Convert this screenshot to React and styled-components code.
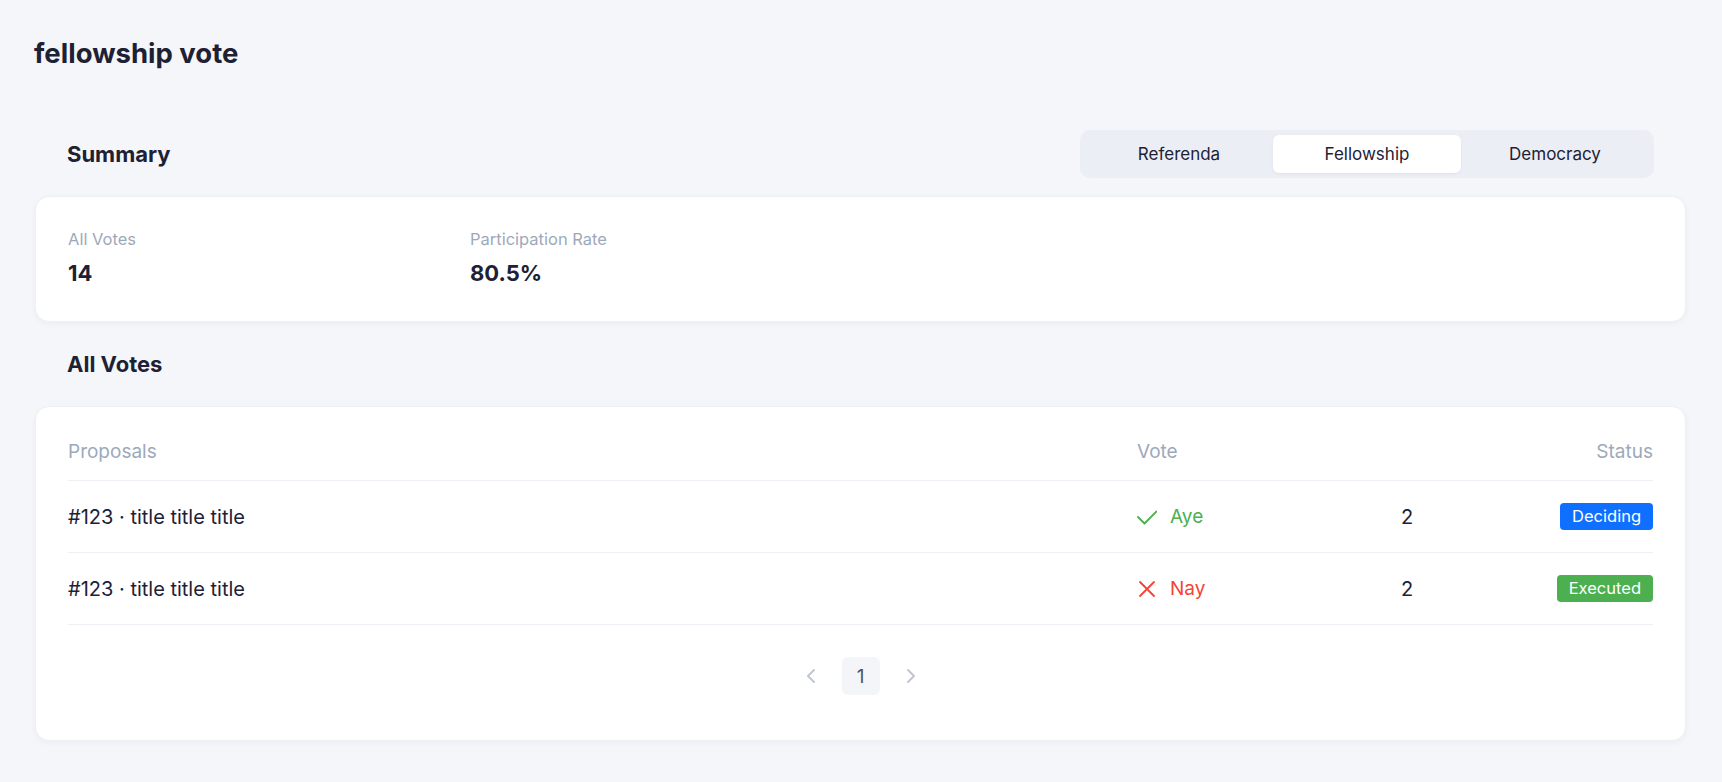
import React from 'react';
import styled, { createGlobalStyle } from 'styled-components';

const GlobalStyle = createGlobalStyle`
  * { box-sizing: border-box; }
  body {
    margin: 0;
    background: #f5f6fa;
    font-family: Inter, "Noto Sans", sans-serif;
    color: #1e2134;
  }
`

const tabs = ['Referenda', 'Fellowship', 'Democracy']
const votes = [
    { id: 123, title: 'title title title', aye: true, count: 2, status: 'Deciding' },
    { id: 123, title: 'title title title', aye: false, count: 2, status: 'Executed' },
]

const CheckIcon = () => (
    <svg width="20" height="20" viewBox="0 0 20 20" fill="none">
        <polyline points="1,10 7.5,16.5 19.5,4.5" stroke="currentColor" strokeWidth="1.8" strokeLinecap="round" strokeLinejoin="round" />
    </svg>
)

const CrossIcon = () => (
    <svg width="20" height="20" viewBox="0 0 20 20" fill="none">
        <path d="M3 3 L17 17 M17 3 L3 17" stroke="currentColor" strokeWidth="1.8" strokeLinecap="round" />
    </svg>
)

const Chevron = ({ dir }) => (
    <svg width="24" height="24" viewBox="0 0 24 24" fill="none">
        <path d={dir === 'left' ? 'M15 18 L9 12 L15 6' : 'M9 18 L15 12 L9 6'} stroke="currentColor" strokeWidth="2" strokeLinecap="round" strokeLinejoin="round" />
    </svg>
)

const App = () => {
    return (
        <Page>
            <GlobalStyle />
            <PageTitle>fellowship vote</PageTitle>
            <Section>
                <SectionHeader>
                    <SectionTitle>Summary</SectionTitle>
                    <Tabs>
                        {tabs.map(t => (
                            <Tab key={t} $active={t === 'Fellowship'}>{t}</Tab>
                        ))}
                    </Tabs>
                </SectionHeader>
                <Card>
                    <Stats>
                        <Stat>
                            <StatLabel>All Votes</StatLabel>
                            <StatValue>14</StatValue>
                        </Stat>
                        <Stat>
                            <StatLabel>Participation Rate</StatLabel>
                            <StatValue>80.5%</StatValue>
                        </Stat>
                    </Stats>
                </Card>
                <SectionHeader>
                    <SectionTitle>All Votes</SectionTitle>
                </SectionHeader>
                <TableCard>
                    <HeadRow>
                        <HeadCell>Proposals</HeadCell>
                        <HeadCell>Vote</HeadCell>
                        <HeadCell />
                        <HeadCell $right>Status</HeadCell>
                    </HeadRow>
                    {votes.map((v, i) => (
                        <Row key={i}>
                            <Cell>#{v.id} · {v.title}</Cell>
                            <VoteCell $aye={v.aye}>
                                {v.aye ? <CheckIcon /> : <CrossIcon />}
                                {v.aye ? 'Aye' : 'Nay'}
                            </VoteCell>
                            <Cell $center>{v.count}</Cell>
                            <Cell $right>
                                <Badge $status={v.status}>{v.status}</Badge>
                            </Cell>
                        </Row>
                    ))}
                    <Pagination>
                        <PageArrow><Chevron dir="left" /></PageArrow>
                        <PageButton>1</PageButton>
                        <PageArrow><Chevron dir="right" /></PageArrow>
                    </Pagination>
                </TableCard>
            </Section>
        </Page>
    );
};

export default App;

const Page = styled.main`
    min-height: 100vh;
    padding: 37px 36px 40px 35px;
`
const PageTitle = styled.h1`
    margin: 0 0 61px -1px;
    font-size: 27.5px;
    line-height: 32px;
    font-weight: 700;
    color: #1e2134;
`
const Section = styled.div`
    display: flex;
    flex-direction: column;
    gap: 18px;
`
const SectionHeader = styled.div`
    display: flex;
    align-items: center;
    justify-content: space-between;
    min-height: 48px;
    padding: 0 32px;
`
const SectionTitle = styled.h2`
    margin: 0;
    font-size: 22px;
    line-height: 28px;
    font-weight: 700;
    color: #1e2134;
`
const Tabs = styled.div`
    display: flex;
    padding: 5px;
    background: #ebeef4;
    border-radius: 10px;
`
const Tab = styled.button`
    width: 188px;
    height: 38px;
    border: none;
    border-radius: 6px;
    font-family: Inter, sans-serif;
    font-size: 17px;
    color: #1e2134;
    background: ${p => p.$active ? '#ffffff' : 'transparent'};
    box-shadow: ${p => p.$active ? '0 1px 3px rgba(30, 33, 52, 0.06)' : 'none'};
    cursor: pointer;
`
const Card = styled.section`
    background: #ffffff;
    border: 1px solid #edf0f5;
    border-radius: 14px;
    box-shadow: 0 2px 6px rgba(30, 33, 52, 0.04);
    padding: 31px 32px 33px;
`
const Stats = styled.div`
    display: grid;
    grid-template-columns: 402px 1fr;
`
const Stat = styled.div`
    display: flex;
    flex-direction: column;
    gap: 8px;
`
const StatLabel = styled.span`
    font-size: 16.5px;
    line-height: 22px;
    color: #9da9bb;
`
const StatValue = styled.span`
    font-size: 22px;
    line-height: 30px;
    font-weight: 700;
    color: #1e2134;
`
const TableCard = styled(Card)`
    padding: 23px 32px 45px;
`
const columns = '1069px 210px 120px 1fr'
const HeadRow = styled.div`
    display: grid;
    grid-template-columns: ${columns};
    padding: 10px 0 16px;
    border-bottom: 1px solid #edf0f5;
`
const HeadCell = styled.div`
    font-size: 19px;
    line-height: 24px;
    color: #9da9bb;
    text-align: ${p => p.$right ? 'right' : 'left'};
`
const Row = styled.div`
    display: grid;
    grid-template-columns: ${columns};
    align-items: center;
    height: 72px;
    border-bottom: 1px solid #edf0f5;
`
const Cell = styled.div`
    font-size: 20px;
    line-height: 24px;
    color: #1e2134;
    text-align: ${p => p.$right ? 'right' : p.$center ? 'center' : 'left'};
`
const VoteCell = styled.div`
    display: flex;
    align-items: center;
    gap: 13px;
    font-size: 19px;
    line-height: 24px;
    color: ${p => p.$aye ? '#4caf50' : '#f44336'};
`
const statusColors = {
    Deciding: '#0f6fff',
    Executed: '#4caf50',
}
const Badge = styled.span`
    display: inline-block;
    padding: 0 12px;
    height: 27px;
    line-height: 27px;
    border-radius: 4px;
    font-size: 16.5px;
    color: #ffffff;
    background: ${p => statusColors[p.$status]};
`
const Pagination = styled.div`
    display: flex;
    justify-content: center;
    align-items: center;
    gap: 12px;
    margin-top: 32px;
`
const PageArrow = styled.button`
    display: flex;
    align-items: center;
    justify-content: center;
    width: 38px;
    height: 38px;
    padding: 0;
    border: none;
    background: transparent;
    color: #c0c6d4;
    cursor: pointer;
`
const PageButton = styled.button`
    width: 38px;
    height: 38px;
    border: none;
    border-radius: 6px;
    background: #f3f5f9;
    font-family: Inter, sans-serif;
    font-size: 19px;
    color: #4a5568;
    cursor: pointer;
`
